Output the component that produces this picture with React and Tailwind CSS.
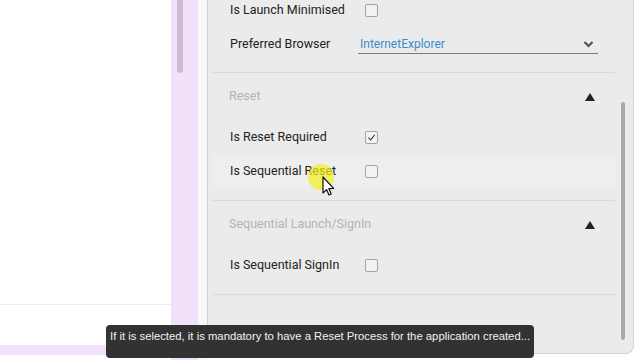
import React from 'react';

const Checkbox = ({ checked }) => (
  <div className="ml-[7px] flex h-[13px] w-[13px] items-center justify-center rounded-[2px] border border-[#a3a3a3] bg-[#f2f2f2]">
    {checked && (
      <svg width="9" height="9" viewBox="0 0 10 10">
        <path d="M1.5 5.2 L4 7.6 L8.6 2.2" fill="none" stroke="#444" strokeWidth="1.3" />
      </svg>
    )}
  </div>
);

const Row = ({ label, checked, hover }) => (
  <div className={`ml-[5px] flex h-[34px] items-center pl-[17px] ${hover ? 'bg-[#eeeeee]' : ''}`}>
    <span className="w-[128px] text-[12.5px] text-[#222]">{label}</span>
    <Checkbox checked={checked} />
  </div>
);

const Header = ({ title }) => (
  <div className="ml-[5px] flex h-[47px] items-center justify-between pl-[16px] pr-[20px]">
    <span className="text-[12.5px] text-[#b3b3b3]">{title}</span>
    <span className="h-0 w-0 border-x-[5px] border-b-[8px] border-x-transparent border-b-[#222]" />
  </div>
);

const Divider = () => <div className="ml-[5px] h-px bg-[#d9d9d9]" />;

export default function App() {
  return (
    <div className="relative flex h-[360px] w-[640px] overflow-hidden bg-white font-['Roboto',sans-serif]">
      <div className="flex w-[171px] flex-col">
        <div className="h-[305px] border-b border-[#f3e5fa] bg-white" />
        <div className="h-[40px] bg-white" />
        <div className="h-[10px] bg-[#f1e1fb]" />
        <div className="flex-1 bg-white" />
      </div>
      <div className="w-[27px] bg-[#f1e1fb]">
        <div className="ml-[6px] h-[73px] w-[6px] rounded-b-[3px] bg-[#cbbcd6]" />
      </div>
      <div className="w-[9px] bg-[#f8f8f8]" />
      <div className="flex h-[354px] w-[427px] overflow-hidden rounded-br-[8px] border-x border-b border-[#d3d3d3] bg-[#ebebeb]">
        <div className="-mt-[7px] w-[407px]">
          <Row label="Is Launch Minimised" />
          <div className="ml-[5px] flex h-[34px] items-center pl-[17px]">
            <span className="w-[128px] text-[12.5px] text-[#222]">Preferred Browser</span>
            <div className="flex h-[20px] w-[240px] items-center justify-between border-b border-[#7a7a7a] pl-[2px] pr-[4px]">
              <span className="text-[12px] text-[#3d8ccc]">InternetExplorer</span>
              <svg width="11" height="8" viewBox="0 0 11 8">
                <path d="M1.5 2 L5.5 6 L9.5 2" fill="none" stroke="#555" strokeWidth="2.2" />
              </svg>
            </div>
          </div>
          <div className="h-[11px]" />
          <Divider />
          <Header title="Reset" />
          <Row label="Is Reset Required" checked />
          <Row label="Is Sequential Reset" hover />
          <div className="h-[12px]" />
          <Divider />
          <Header title="Sequential Launch/SignIn" />
          <Row label="Is Sequential SignIn" />
          <div className="h-[12px]" />
          <Divider />
        </div>
        <div className="ml-[6px] w-[4px]">
          <div className="mt-[102px] h-[238px] w-[4px] rounded-full bg-[#a8a8a8]" />
        </div>
      </div>
      <div className="flex-1 bg-white" />

      <div className="absolute left-[106px] top-[325px] h-[33px] w-[428px] whitespace-nowrap rounded-[4px] bg-[#323232] px-[4px] pt-[3px] font-['Liberation_Sans',Arial,sans-serif] text-[11.3px] leading-[16px] text-[#f2f2f2]">
        If it is selected, it is mandatory to have a Reset Process for the application created...
      </div>

      <svg className="absolute left-[306px] top-[162px]" width="36" height="36" viewBox="0 0 36 36">
        <circle cx="15" cy="15" r="13" fill="#f5ee1c" fillOpacity="0.7" />
        <path d="M17 15 L17 31 L20.6 27.6 L23 33 L25.2 32 L22.8 26.6 L27.6 26.4 Z" fill="#fff" stroke="#111" strokeWidth="1.2" strokeLinejoin="round" />
      </svg>
    </div>
  );
}
